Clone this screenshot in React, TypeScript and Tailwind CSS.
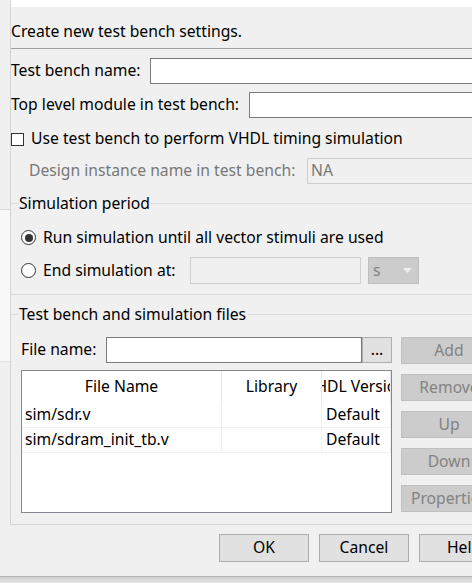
import React from 'react';

// Windows-style push button; disabled ones get the flat grey look
function PushButton({ label, disabled, className }: { label: string; disabled?: boolean; className?: string }) {
  return (
    <div
      className={`flex items-center justify-center whitespace-nowrap border ${
        disabled ? 'border-[#bfbfbf] bg-[#cccccc] text-[#838383]' : 'border-[#adadad] bg-[#e1e1e1] text-black'
      } ${className ?? ''}`}
    >
      {label}
    </div>
  );
}

function GroupTitle({ title }: { title: string }) {
  return (
    <div className="flex h-[22px] items-center">
      <div className="h-px w-[7px] bg-[#dcdcdc]" />
      <span className="px-[1px] leading-[22px]">{title}</span>
      <div className="h-px flex-1 bg-[#dcdcdc]" />
    </div>
  );
}

function Radio({ checked, label }: { checked?: boolean; label: string }) {
  return (
    <div className="flex items-center gap-[7px]">
      <div className="flex h-[15px] w-[15px] items-center justify-center rounded-full border border-[#333333] bg-white">
        {checked && <div className="h-[8px] w-[8px] rounded-full bg-[#333333]" />}
      </div>
      <span>{label}</span>
    </div>
  );
}

const files = [
  { name: 'sim/sdr.v', library: '', version: 'Default' },
  { name: 'sim/sdram_init_tb.v', library: '', version: 'Default' },
];

function FileTable() {
  return (
    <div className="mt-[7px] h-[143px] w-[371px] border border-[#828790] bg-white">
      <div className="flex h-[32px]">
        <div className="flex w-[200px] items-center justify-center border-r border-[#e5e5e5]">File Name</div>
        <div className="flex w-[100px] items-center justify-center border-r border-[#e5e5e5]">Library</div>
        <div className="flex w-[69px] items-center justify-center overflow-hidden whitespace-nowrap border-r border-[#e5e5e5]">
          VHDL Version
        </div>
      </div>
      {files.map((f) => (
        <div key={f.name} className="flex h-[25px] border-b border-[#f0f0f0]">
          <div className="flex w-[200px] items-center border-r border-[#f0f0f0] pl-[3px]">{f.name}</div>
          <div className="flex w-[100px] items-center border-r border-[#f0f0f0]">{f.library}</div>
          <div className="flex w-[69px] items-center border-r border-[#f0f0f0] pl-[4px]">{f.version}</div>
        </div>
      ))}
    </div>
  );
}

export default function App() {
  return (
    <div className="flex h-[583px] w-[472px] flex-col overflow-hidden bg-[#f0f0f0] font-['Noto_Sans',sans-serif] text-[15.7px] text-black">
      <div className="flex h-[525px] shrink-0">
        {/* edge of the window underneath */}
        <div className="flex w-[10px] shrink-0 flex-col">
          <div className="h-[210px] border-b border-[#dadada] bg-[#f0f0f0]" />
          <div className="h-[152px] border-b border-[#e2e2e2] bg-[#f8f8f8]" />
          <div className="flex-1 bg-[#f0f0f0]" />
        </div>

        <div className="flex w-[620px] shrink-0 flex-col border-l border-b border-[#d4d4d4]">
          <div className="h-[7px] bg-white" />
          <div className="mt-[14px] h-[20px] leading-[20px]">Create new test bench settings.</div>
          <div className="mt-[7px] h-px bg-[#a0a0a0]" />

          <div className="mt-[9px] flex h-[26px] items-center">
            <span className="w-[139px] shrink-0">Test bench name:</span>
            <div className="h-[26px] flex-1 border border-[#7a7a7a] bg-white" />
          </div>
          <div className="mt-[8px] flex h-[26px] items-center">
            <span className="w-[238px] shrink-0">Top level module in test bench:</span>
            <div className="h-[26px] flex-1 border border-[#7a7a7a] bg-white" />
          </div>

          <div className="mt-[8px] flex h-[26px] items-center gap-[7px]">
            <div className="h-[13px] w-[13px] border border-[#333333] bg-white" />
            <span>Use test bench to perform VHDL timing simulation</span>
          </div>
          <div className="mt-[6px] flex h-[26px] items-center">
            <span className="w-[296px] shrink-0 pl-[18px] text-[#787878]">Design instance name in test bench:</span>
            <div className="flex h-[26px] flex-1 items-center border border-[#cccccc] bg-[#f0f0f0] pl-[3px] text-[#787878]">
              NA
            </div>
          </div>

          <div className="mt-[8px]">
            <GroupTitle title="Simulation period" />
          </div>
          <div className="mt-[11px] flex h-[26px] items-center pl-[10px]">
            <Radio checked label="Run simulation until all vector stimuli are used" />
          </div>
          <div className="mt-[6px] flex h-[27px] items-center pl-[10px]">
            <div className="w-[169px] shrink-0">
              <Radio label="End simulation at:" />
            </div>
            <div className="h-[27px] w-[171px] border border-[#d0d0d0] bg-[#f0f0f0]" />
            <div className="ml-[7px] flex h-[27px] w-[51px] items-center justify-between border border-[#bfbfbf] bg-[#cccccc] pl-[4px] pr-[6px] text-[#838383]">
              <span>s</span>
              <svg width="9" height="5" viewBox="0 0 9 5">
                <polygon points="0,0 9,0 4.5,5" fill="#efefef" />
              </svg>
            </div>
          </div>
          <div className="mt-[10px] h-px bg-[#dcdcdc]" />

          <div className="mt-[8px]">
            <GroupTitle title="Test bench and simulation files" />
          </div>
          <div className="mt-[12px] flex pl-[10px]">
            <div className="flex flex-col">
              <div className="flex h-[26px] items-center">
                <span className="w-[85px] shrink-0">File name:</span>
                <div className="h-[26px] w-[256px] border border-[#7a7a7a] bg-white" />
                <PushButton label="..." className="h-[26px] w-[30px] leading-none" />
              </div>
              <FileTable />
            </div>
            <div className="ml-[9px] flex flex-col gap-[10px]">
              {['Add', 'Remove', 'Up', 'Down', 'Properties'].map((b) => (
                <PushButton key={b} label={b} disabled className="h-[27px] w-[96px]" />
              ))}
            </div>
          </div>
        </div>
      </div>

      <div className="flex h-[51px] shrink-0 gap-[10px] pl-[219px] pt-[9px]">
        <PushButton label="OK" className="h-[28px] w-[90px] shrink-0" />
        <PushButton label="Cancel" className="h-[28px] w-[90px] shrink-0" />
        <PushButton label="Help" className="h-[28px] w-[90px] shrink-0" />
      </div>
      <div className="h-[7px] shrink-0 border-t border-[#b4b4b4] bg-gradient-to-b from-[#cfcfcf] to-[#e4e4e4]" />
    </div>
  );
}
